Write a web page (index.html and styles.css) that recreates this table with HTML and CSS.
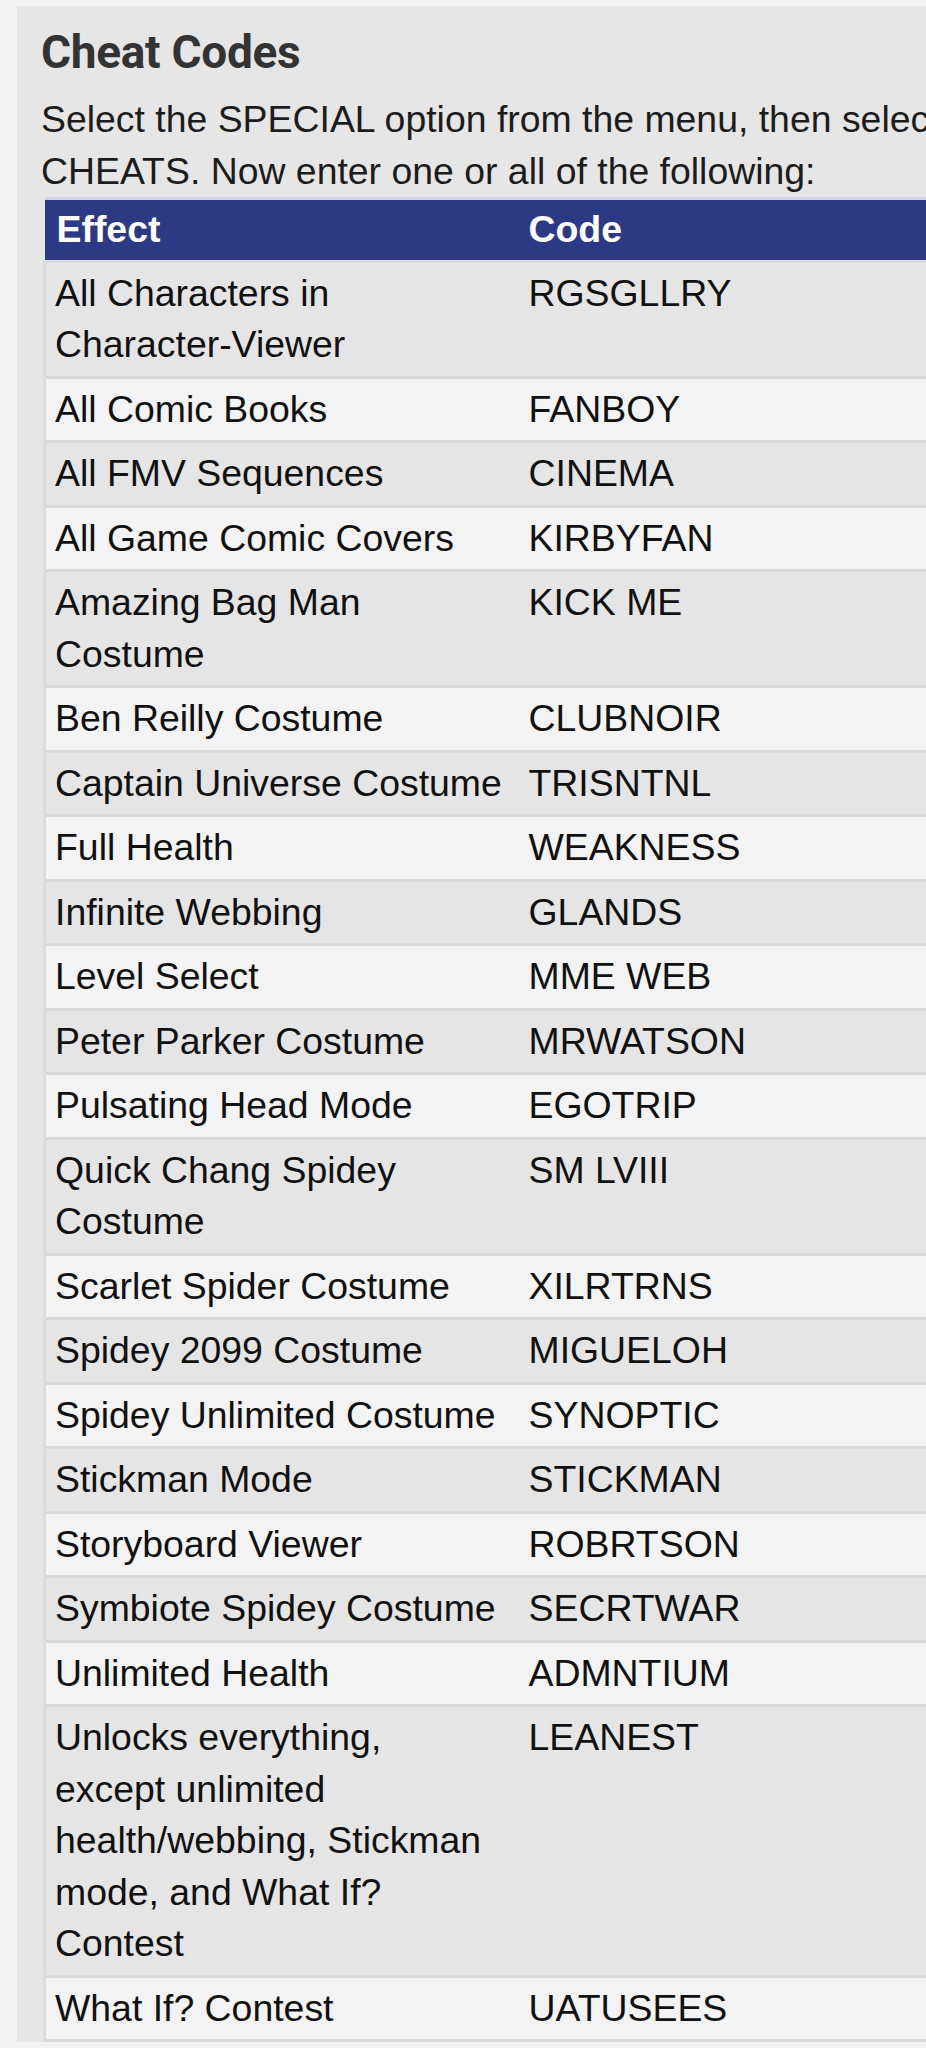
FILE: index.html
```html
<!DOCTYPE html>
<html lang="en">
<head>
<meta charset="utf-8">
<title>Cheat Codes</title>
<link rel="stylesheet" href="styles.css">
</head>
<body>
<div class="page">
  <section class="panel">
    <h2 class="title">Cheat Codes</h2>
    <p class="intro">Select the SPECIAL option from the menu, then select CHEATS. Now enter one or all of the following:</p>
    <table class="codes">
      <colgroup><col class="col-effect"><col class="col-code"></colgroup>
      <thead>
        <tr><th>Effect</th><th>Code</th></tr>
      </thead>
      <tbody>
        <tr><td>All Characters in <span class="nowrap">Character-Viewer</span></td><td>RGSGLLRY</td></tr>
        <tr><td>All Comic Books</td><td>FANBOY</td></tr>
        <tr><td>All FMV Sequences</td><td>CINEMA</td></tr>
        <tr><td>All Game Comic Covers</td><td>KIRBYFAN</td></tr>
        <tr><td>Amazing Bag Man Costume</td><td>KICK ME</td></tr>
        <tr><td>Ben Reilly Costume</td><td>CLUBNOIR</td></tr>
        <tr><td>Captain Universe Costume</td><td>TRISNTNL</td></tr>
        <tr><td>Full Health</td><td>WEAKNESS</td></tr>
        <tr><td>Infinite Webbing</td><td>GLANDS</td></tr>
        <tr><td>Level Select</td><td>MME WEB</td></tr>
        <tr><td>Peter Parker Costume</td><td>MRWATSON</td></tr>
        <tr><td>Pulsating Head Mode</td><td>EGOTRIP</td></tr>
        <tr><td>Quick Chang Spidey Costume</td><td>SM LVIII</td></tr>
        <tr><td>Scarlet Spider Costume</td><td>XILRTRNS</td></tr>
        <tr><td>Spidey 2099 Costume</td><td>MIGUELOH</td></tr>
        <tr><td>Spidey Unlimited Costume</td><td>SYNOPTIC</td></tr>
        <tr><td>Stickman Mode</td><td>STICKMAN</td></tr>
        <tr><td>Storyboard Viewer</td><td>ROBRTSON</td></tr>
        <tr><td>Symbiote Spidey Costume</td><td>SECRTWAR</td></tr>
        <tr><td>Unlimited Health</td><td>ADMNTIUM</td></tr>
        <tr><td>Unlocks everything,<br>except unlimited health/webbing, Stickman mode, and What If? Contest</td><td>LEANEST</td></tr>
        <tr><td>What If? Contest</td><td>UATUSEES</td></tr>
      </tbody>
    </table>
  </section>
</div>
</body>
</html>
```

FILE: styles.css
```css
html, body {
  margin: 0;
  padding: 0;
  background: #f2f2f2;
  overflow: hidden;
}

.page {
  width: 1300px;
  padding: 6px 0 0 17px;
}

.panel {
  background: #e6e6e6;
  padding: 20px 0 0 24px;
  width: 1200px;
}

.title {
  margin: 0;
  font-family: Roboto, "Liberation Sans", sans-serif;
  font-weight: 700;
  font-size: 46px;
  line-height: 52px;
  color: #333333;
  letter-spacing: -0.3px;
}

.intro {
  margin: 16px 0 0 0;
  max-width: 1010px;
  font-family: "Liberation Sans", Arial, sans-serif;
  font-size: 37.4px;
  line-height: 51.5px;
  color: #1c1c1c;
}

.codes {
  border-collapse: collapse;
  width: 1150px;
  margin-left: 2px;
  font-family: "Liberation Sans", Arial, sans-serif;
  font-size: 37.4px;
  line-height: 51.5px;
  color: #111111;
}

.col-effect {
  width: 472px;
}

.nowrap {
  white-space: nowrap;
}

.codes th {
  background: #2c3a86;
  color: #ffffff;
  font-weight: 700;
  text-align: left;
  padding: 4px 12px;
  border-top: 3px solid #d4d4e4;
  vertical-align: top;
}

.codes td {
  padding: 5px 12px;
  vertical-align: top;
  border-top: 3px solid #d9d9d9;
}

.codes td:first-child {
  border-left: 3px solid #dcdcdc;
  padding-left: 9px;
}

.codes tbody tr:nth-child(odd) td {
  background: #e5e5e5;
}

.codes tbody tr:nth-child(even) td {
  background: #f3f3f3;
}

.codes tbody tr:last-child td {
  border-bottom: 3px solid #d9d9d9;
}
```
